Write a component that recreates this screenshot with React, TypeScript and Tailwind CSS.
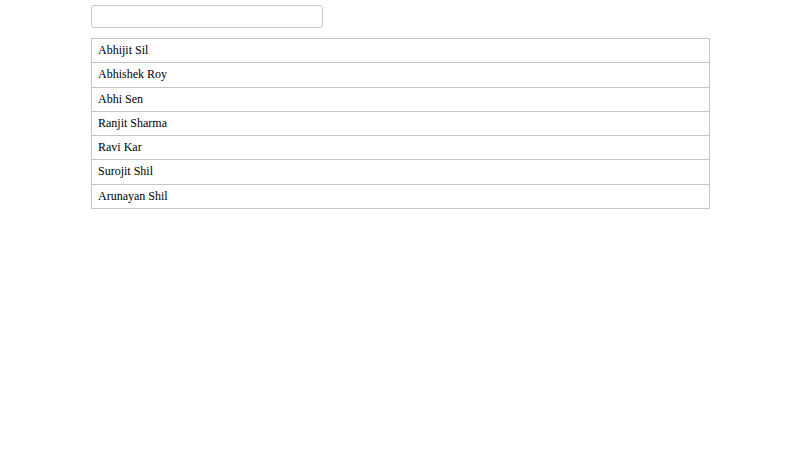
import React, { useState } from 'react'

const names = ['Abhijit Sil', 'Abhishek Roy', 'Abhi Sen', 'Ranjit Sharma', 'Ravi Kar', 'Surojit Shil', 'Arunayan Shil']

export default function App() {
  const [query, setQuery] = useState('')
  const filtered = names.filter(n => n.toLowerCase().includes(query.toLowerCase()))

  return (
    <div className="min-h-[450px] bg-white pt-[5px] font-['Liberation_Serif',serif] text-black">
      <div className="ml-[91px] w-[619px]">
        <input
          value={query}
          onChange={e => setQuery(e.target.value)}
          className="block h-[23px] w-[232px] rounded-[3px] border border-[#c8c8c8] px-1 text-[12px] outline-none"
        />
        <ul className="mt-[10px] border border-[#c4c4c4]">
          {filtered.map((n, i) => (
            <li
              key={n}
              className={`px-[6px] py-[5px] text-[12px] leading-[13.3px] ${i > 0 ? 'border-t border-[#c4c4c4]' : ''}`}
            >
              {n}
            </li>
          ))}
        </ul>
      </div>
    </div>
  )
}
